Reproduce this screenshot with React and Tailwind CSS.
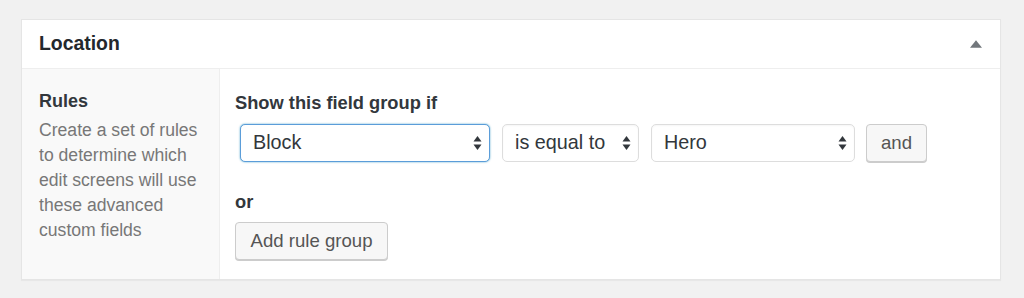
const font = { fontFamily: '"Liberation Sans", Arial, sans-serif' };

function Arrows() {
  return (
    <svg width="9" height="16" viewBox="0 0 9 16" className="shrink-0">
      <path d="M4.5 1 L8.5 6.5 L0.5 6.5 Z" fill="#32373c" />
      <path d="M4.5 15 L8.5 9.5 L0.5 9.5 Z" fill="#32373c" />
    </svg>
  );
}

function Select({ label, width, focused }) {
  return (
    <div
      className={`flex h-[38px] items-center justify-between rounded-[5px] border bg-white pl-[12px] pr-[7px] text-[19.8px] text-[#32373c] ${
        focused
          ? "border-[#5b9dd9] shadow-[0_0_2px_rgba(30,140,190,0.8)]"
          : "border-[#dddddd] shadow-[inset_0_1px_2px_rgba(0,0,0,0.04)]"
      }`}
      style={{ width }}
    >
      <span>{label}</span>
      <Arrows />
    </div>
  );
}

function Button({ children, className = "" }) {
  return (
    <button
      className={`h-[38px] rounded-[4px] border border-[#cccccc] bg-[#f7f7f7] px-[13px] text-[18.6px] text-[#555555] shadow-[0_1px_0_#cccccc] ${className}`}
    >
      {children}
    </button>
  );
}

export default function App() {
  return (
    <div className="min-h-[298px] bg-[#f1f1f1] pl-[21px] pt-[19px]" style={font}>
      <div className="w-[980px] border border-[#e5e5e5] bg-white shadow-[0_1px_1px_rgba(0,0,0,0.04)]">
        <div className="flex h-[49px] items-center justify-between border-b border-[#eeeeee] pl-[17px] pr-[18px]">
          <h2 className="text-[19.4px] font-bold text-[#23282d]">Location</h2>
          <svg width="12" height="8" viewBox="0 0 12 8">
            <path d="M6 0.3 L12 7.7 L0 7.7 Z" fill="#72777c" />
          </svg>
        </div>

        <div className="flex">
          <div className="w-[198px] shrink-0 border-r border-[#eeeeee] bg-[#f9f9f9] pl-[17px] pr-[14px] pt-[20px]">
            <p className="text-[18px] font-bold leading-[25px] text-[#32373c]">Rules</p>
            <p className="mt-[4px] text-[17.6px] leading-[25px] text-[#777777]">
              Create a set of rules to determine which edit screens will use
              these advanced custom fields
            </p>
          </div>

          <div className="flex-1 pb-[19px] pl-[15px] pt-[21px]">
            <p className="text-[18.3px] font-bold leading-[25px] text-[#32373c]">
              Show this field group if
            </p>

            <div className="mt-[9px] flex items-center gap-[12px] pl-[5px]">
              <Select label="Block" width={250} focused />
              <Select label="is equal to" width={137} />
              <Select label="Hero" width={204} />
              <Button className="-ml-[1px] w-[61px] px-0">and</Button>
            </div>

            <p className="mt-[27px] text-[18.3px] font-bold leading-[25px] text-[#32373c]">or</p>

            <Button className="mt-[8px] w-[153px] px-0">Add rule group</Button>
          </div>
        </div>
      </div>
    </div>
  );
}
